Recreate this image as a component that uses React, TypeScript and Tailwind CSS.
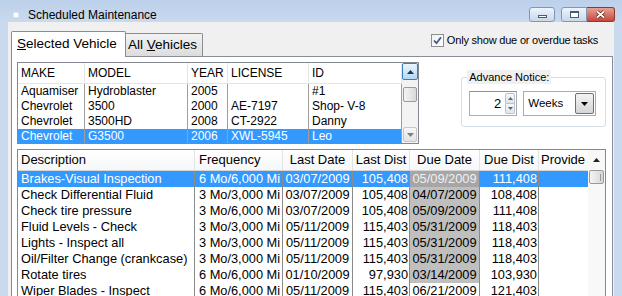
import React from 'react';

const TOP_COLS = ['w-[67px]', 'w-[103px]', 'w-[40px]', 'w-[81px]', 'w-[93px]'];
const TOP_HEAD = ['MAKE', 'MODEL', 'YEAR', 'LICENSE', 'ID'];

const VEHICLES = [
  ['Aquamiser', 'Hydroblaster', '2005', '', '#1'],
  ['Chevrolet', '3500', '2000', 'AE-7197', 'Shop- V-8'],
  ['Chevrolet', '3500HD', '2008', 'CT-2922', 'Danny'],
  ['Chevrolet', 'G3500', '2006', 'XWL-5945', 'Leo'],
];

const GRID_COLS = [
  { label: 'Description', w: 'w-[177px]', head: 'justify-start pl-[3px]', cell: 'text-left pl-[3px]' },
  { label: 'Frequency', w: 'w-[88px]', head: 'justify-start pl-[4px]', cell: 'text-left pl-[4px]' },
  { label: 'Last Date', w: 'w-[70px]', head: 'justify-center', cell: 'text-center' },
  { label: 'Last Dist', w: 'w-[57px]', head: 'justify-center', cell: 'text-right pr-[1px]' },
  { label: 'Due Date', w: 'w-[70px]', head: 'justify-center', cell: 'text-center' },
  { label: 'Due Dist', w: 'w-[59px]', head: 'justify-center', cell: 'text-right pr-[1px]' },
  { label: 'Provide', w: 'w-[49px]', head: 'justify-start pl-[2px]', cell: 'text-left pl-[2px]' },
];

const TASKS = [
  { d: 'Brakes-Visual Inspection', f: '6 Mo/6,000 Mi', ld: '03/07/2009', lm: '105,408', dd: '05/09/2009', dm: '111,408', due: true },
  { d: 'Check Differential Fluid', f: '3 Mo/3,000 Mi', ld: '03/07/2009', lm: '105,408', dd: '04/07/2009', dm: '108,408', due: true },
  { d: 'Check tire pressure', f: '3 Mo/6,000 Mi', ld: '03/07/2009', lm: '105,408', dd: '05/09/2009', dm: '111,408', due: true },
  { d: 'Fluid Levels - Check', f: '3 Mo/3,000 Mi', ld: '05/11/2009', lm: '115,403', dd: '05/31/2009', dm: '118,403', due: true },
  { d: 'Lights - Inspect all', f: '3 Mo/3,000 Mi', ld: '05/11/2009', lm: '115,403', dd: '05/31/2009', dm: '118,403', due: true },
  { d: 'Oil/Filter Change (crankcase)', f: '3 Mo/3,000 Mi', ld: '05/11/2009', lm: '115,403', dd: '05/31/2009', dm: '118,403', due: true },
  { d: 'Rotate tires', f: '6 Mo/6,000 Mi', ld: '01/10/2009', lm: '97,930', dd: '03/14/2009', dm: '103,930', due: true },
  { d: 'Wiper Blades - Inspect', f: '6 Mo/6,000 Mi', ld: '05/11/2009', lm: '115,403', dd: '06/21/2009', dm: '121,403', due: false },
];

const Tri = ({ up, color = '#000' }: { up?: boolean; color?: string }) => (
  <svg width="7" height="4" viewBox="0 0 7 4">
    <path d={up ? 'M0 4 L3.5 0 L7 4 Z' : 'M0 0 L7 0 L3.5 4 Z'} fill={color} />
  </svg>
);

const CaptionButtons = () => (
  <div className="flex items-start pt-[7px] pr-[7px]">
    <div className="w-[26px] h-[15px] rounded-[3px] border border-[#8197b5] bg-gradient-to-b from-[#eef4fb] to-[#c9d8ea] flex items-end justify-center pb-[3px]">
      <div className="w-[9px] h-[3px] bg-white border border-[#4a5a70]" />
    </div>
    <div className="ml-[6px] w-[26px] h-[15px] rounded-l-[3px] border border-[#8197b5] bg-gradient-to-b from-[#eef4fb] to-[#c9d8ea] flex items-center justify-center">
      <div className="w-[9px] h-[7px] border border-[#4a5a70] border-t-[2px] bg-white" />
    </div>
    <div className="w-[28px] h-[15px] rounded-r-[3px] border border-l-0 border-[#8c3b31] bg-gradient-to-b from-[#e7a195] to-[#c4453a] flex items-center justify-center">
      <svg width="11" height="9" viewBox="0 0 11 9">
        <path d="M2 1.5 L9 7.5 M9 1.5 L2 7.5" stroke="#5a1a14" strokeWidth="3.4" />
        <path d="M2 1.5 L9 7.5 M9 1.5 L2 7.5" stroke="#fff" strokeWidth="1.9" />
      </svg>
    </div>
  </div>
);

const TopList = () => (
  <div className="w-[403px] h-[82px] border border-[#828790] bg-white flex overflow-hidden">
    <div className="w-[384px] flex flex-col">
      <div className="h-[21px] shrink-0 flex border-b border-[#e5e5e5] text-[12px]">
        {TOP_HEAD.map((h, i) => (
          <div key={h} className={`${TOP_COLS[i]} flex items-center pl-[3px] border-r border-[#e5e5e5]`}>{h}</div>
        ))}
      </div>
      {VEHICLES.map((row, r) => (
        <div key={r} className={`h-[15px] shrink-0 flex text-[12px] leading-[15px] ${r === 3 ? 'bg-[#3399ff] text-white' : ''}`}>
          {row.map((c, i) => (
            <div key={i} className={`${TOP_COLS[i]} pl-[3px] whitespace-nowrap overflow-hidden border-r border-[#9e9e9e]`}>{c}</div>
          ))}
        </div>
      ))}
    </div>
    <div className="w-[17px] bg-[#f3f3f3] flex flex-col">
      <div className="h-[17px] rounded-[2px] border border-[#3c7fb1] bg-gradient-to-b from-[#eaf6fd] to-[#b2d9f3] flex items-center justify-center">
        <Tri up color="#1d3a59" />
      </div>
      <div className="mt-[7px] h-[15px] mx-[1px] rounded-[2px] border border-[#9a9a9a] bg-gradient-to-r from-[#f5f5f5] to-[#d9d9d9]" />
      <div className="flex-1" />
      <div className="h-[15px] mx-[1px] mb-[1px] rounded-[2px] border border-[#c8c8c8] bg-gradient-to-b from-[#f8f8f8] to-[#e2e2e2] flex items-center justify-center">
        <Tri color="#808080" />
      </div>
    </div>
  </div>
);

const AdvanceNotice = () => (
  <fieldset className="ml-[42px] mt-[8px] w-[145px] border border-[#d5dfe5] rounded-[3px] pl-[7px] pt-[7px] pb-[10px]">
    <legend className="-ml-[2px] px-[2px] bg-[#f0f0f0] text-[11px] leading-[14px]">Advance Notice:</legend>
    <div className="flex">
      <div className="w-[48px] h-[25px] border border-[#abadb3] border-t-[#8e9198] bg-white flex">
        <div className="flex-1 text-right pr-[4px] text-[13px] leading-[23px]">2</div>
        <div className="w-[10px] mr-[1px] my-[1px] flex flex-col">
          <div className="flex-1 border border-[#b9c2cd] rounded-t-[2px] bg-gradient-to-b from-[#f7f9fb] to-[#dfe5ec] flex items-center justify-center">
            <svg width="5" height="3" viewBox="0 0 5 3"><path d="M0 3 L2.5 0 L5 3 Z" fill="#5a6573" /></svg>
          </div>
          <div className="flex-1 border border-t-0 border-[#b9c2cd] rounded-b-[2px] bg-gradient-to-b from-[#f7f9fb] to-[#dfe5ec] flex items-center justify-center">
            <svg width="5" height="3" viewBox="0 0 5 3"><path d="M0 0 L5 0 L2.5 3 Z" fill="#5a6573" /></svg>
          </div>
        </div>
      </div>
      <div className="ml-[6px] w-[73px] h-[25px] border border-[#acacac] bg-white flex items-center justify-between pl-[4px] pr-[1px]">
        <span className="text-[11.5px]">Weeks</span>
        <div className="w-[19px] h-[21px] rounded-[2px] border border-[#707070] bg-gradient-to-b from-[#f3f3f3] to-[#d6d6d6] flex items-center justify-center">
          <Tri color="#000" />
        </div>
      </div>
    </div>
  </fieldset>
);

const TaskGrid = () => (
  <div className="mt-[5px] w-[589px] flex-1 border border-[#828790] bg-white flex">
    <div className="w-[570px] flex flex-col">
      <div className="h-[21px] flex border-b border-[#d5d5d5] bg-gradient-to-b from-white to-[#f6f7f9] text-[13px]">
        {GRID_COLS.map((c, i) => (
          <div key={c.label} className={`${c.w} ${c.head} flex items-center whitespace-nowrap overflow-hidden ${i < 6 ? 'border-r border-[#e3e3e3]' : ''}`}>{c.label}</div>
        ))}
      </div>
      {TASKS.map((t, r) => {
        const sel = r === 0;
        const vals = [t.d, t.f, t.ld, t.lm, t.dd, t.dm, ''];
        return (
          <div key={t.d} className={`h-[16px] shrink-0 flex text-[12.8px] leading-[16px] ${sel ? 'bg-[#3399ff] text-white' : ''}`}>
            {GRID_COLS.map((c, i) => {
              let tone = '';
              if (i === 4 && t.due) tone = sel ? 'bg-[#a6a6a6] text-[#f0f0f0]' : 'bg-[#bfbfbf]';
              return (
                <div key={i} className={`${c.w} ${c.cell} ${tone} whitespace-nowrap overflow-hidden ${i < 6 ? 'border-r border-[#8a8a8a]' : ''}`}>{vals[i]}</div>
              );
            })}
          </div>
        );
      })}
    </div>
    <div className="w-[17px] bg-[#f8f8f8] flex flex-col">
      <div className="h-[20px] flex items-center justify-center">
        <Tri up color="#222" />
      </div>
      <div className="h-[14px] mx-[1px] rounded-[2px] border border-[#9a9a9a] bg-gradient-to-r from-[#f5f5f5] to-[#d6d6d6] flex items-center justify-end pr-[2px]">
        <div className="w-[1px] h-[7px] bg-[#9a9a9a]" />
      </div>
    </div>
  </div>
);

export default function App() {
  return (
    <div className="w-[622px] h-[296px] overflow-hidden flex flex-col bg-[#c9daef] font-['Liberation_Sans',Arial,sans-serif] text-black">
      <div className="h-[23px] flex justify-between bg-gradient-to-b from-[#bcd0ea] to-[#c9daef]">
        <div className="h-[14px] mt-[8px] pl-[13px] flex items-center">
          <div className="w-[6px] h-[6px] bg-white border border-[#d6e2f0]" />
          <span className="ml-[9px] text-[12px] leading-[14px]">Scheduled Maintenance</span>
        </div>
        <CaptionButtons />
      </div>
      <div className="flex-1 mx-[8px] bg-[#f0f0f0] flex flex-col">
        <div className="h-[34px] pt-[9px] pl-[3px] pr-[16px] flex items-end justify-between">
          <div className="flex items-end">
            <div className="relative z-10 -mb-px w-[115px] h-[26px] border border-b-0 border-[#898c95] rounded-t-[2px] bg-white flex items-center pl-[5px] pb-[1px] text-[13.5px]">
              <span><span className="underline">S</span>elected Vehicle</span>
            </div>
            <div className="w-[77px] h-[23px] border border-l-0 border-b-0 border-[#898c95] rounded-tr-[2px] bg-gradient-to-b from-[#f3f3f3] to-[#dcdcdc] flex items-center pl-[2px] text-[13.5px]">
              <span>All <span className="underline">V</span>ehicles</span>
            </div>
          </div>
          <div className="self-start mt-[2px] h-[14px] flex items-center">
            <div className="w-[13px] h-[13px] border border-[#8e8f8f] bg-gradient-to-br from-[#f0f0f0] to-[#ffffff] flex items-center justify-center">
              <svg width="9" height="9" viewBox="0 0 9 9">
                <path d="M1 4.5 L3.5 7.2 L8 1.2" stroke="#3f5a8e" strokeWidth="1.8" fill="none" />
              </svg>
            </div>
            <span className="ml-[3px] text-[11px] tracking-[-0.2px]">Only show due or overdue tasks</span>
          </div>
        </div>
        <div className="flex-1 ml-[3px] mr-[1px] border border-[#898c95] bg-white pl-[5px] pt-[5px] pr-[6px] flex flex-col">
          <div className="flex items-start">
            <TopList />
            <AdvanceNotice />
          </div>
          <TaskGrid />
        </div>
      </div>
    </div>
  );
}
